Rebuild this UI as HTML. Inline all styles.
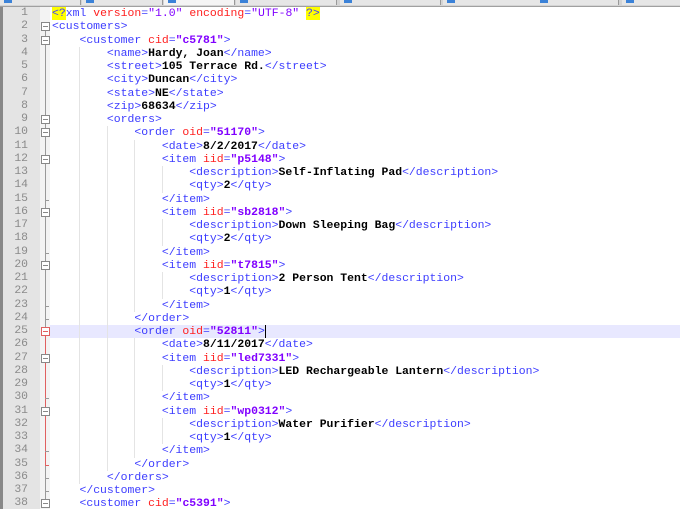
<!DOCTYPE html>
<html><head><meta charset="utf-8"><style>
body{margin:0;width:680px;height:509px;overflow:hidden;background:#fff;position:relative;font-family:"Liberation Mono",monospace}
#tabs{position:absolute;left:0;top:0;width:680px;height:6px;background:#d4d4d4;border-bottom:1px solid #a0a0a0}
.tb{position:absolute;top:0;height:5px;background:#e6e6e6;border-right:1px solid #999}
.ic{position:absolute;top:0;width:8px;height:3px;background:#3b82d8}
#lb{position:absolute;left:0;top:7px;width:3px;height:502px;background:#888}
#gut{position:absolute;left:3px;top:7px;width:37px;height:502px;background:#e4e4e4}
#fold{position:absolute;left:40px;top:7px;width:10px;height:502px;background:#f3f3f3}
.ln{position:absolute;left:3px;width:25px;text-align:right;color:#8a8a8a;font-size:11.4px;line-height:13.25px;font-family:"Liberation Mono",monospace}
.cl{position:absolute;left:52px;white-space:pre;font-size:11.45px;line-height:13.25px;color:#000}
.t{color:#3c3cff}.a{color:#ff2020}.v{color:#8000ff;font-weight:bold}.x{font-weight:bold}
.y{background:#ffff00}
.fb{position:absolute;left:41px;width:7px;height:7px;border:1px solid #888;background:#fff}
.fb:after{content:"";position:absolute;left:1px;top:3px;width:5px;height:1px;background:#888}
.fbr{border-color:#e06060}.fbr:after{background:#e06060}
.vl{position:absolute;left:45px;width:1px;background:#999}
.tk{position:absolute;left:45px;width:4px;height:1px;background:#999}
.ig{position:absolute;width:1px;background:#e4e4e4}
#hl{position:absolute;left:50px;width:630px;height:13px;background:#e8e8ff}
</style></head><body>
<div id="tabs">
<div class="tb" style="left:0;width:80px"></div><div class="ic" style="left:4px"></div>
<div class="tb" style="left:82px;width:80px"></div><div class="ic" style="left:86px"></div>
<div class="tb" style="left:164px;width:70px;background:#f4f4f4"></div><div class="ic" style="left:168px"></div>
<div class="tb" style="left:236px;width:100px"></div><div class="ic" style="left:240px"></div>
<div class="tb" style="left:340px;width:100px"></div><div class="ic" style="left:344px"></div>
<div class="tb" style="left:443px;width:100px"></div><div class="ic" style="left:447px"></div>
<div class="tb" style="left:538px;width:80px"></div><div class="ic" style="left:540px"></div>
<div class="tb" style="left:622px;width:58px"></div><div class="ic" style="left:626px"></div>
</div>
<div id="lb"></div><div id="gut"></div><div id="fold"></div>
<div id="hl" style="top:325px"></div>
<div id="c"></div>
<script>
var L=[
'<span class="t"><span class="y">&lt;?</span>xml </span><span class="a">version</span><span class="t">=</span><span class="v" style="font-weight:normal">"1.0"</span> <span class="a">encoding</span><span class="t">=</span><span class="v" style="font-weight:normal">"UTF-8"</span> <span class="t y">?&gt;</span>',
'<span class="t">&lt;customers&gt;</span>',
'    <span class="t">&lt;customer </span><span class="a">cid</span><span class="t">=</span><span class="v">"c5781"</span><span class="t">&gt;</span>',
'        <span class="t">&lt;name&gt;</span><span class="x">Hardy, Joan</span><span class="t">&lt;/name&gt;</span>',
'        <span class="t">&lt;street&gt;</span><span class="x">105 Terrace Rd.</span><span class="t">&lt;/street&gt;</span>',
'        <span class="t">&lt;city&gt;</span><span class="x">Duncan</span><span class="t">&lt;/city&gt;</span>',
'        <span class="t">&lt;state&gt;</span><span class="x">NE</span><span class="t">&lt;/state&gt;</span>',
'        <span class="t">&lt;zip&gt;</span><span class="x">68634</span><span class="t">&lt;/zip&gt;</span>',
'        <span class="t">&lt;orders&gt;</span>',
'            <span class="t">&lt;order </span><span class="a">oid</span><span class="t">=</span><span class="v">"51170"</span><span class="t">&gt;</span>',
'                <span class="t">&lt;date&gt;</span><span class="x">8/2/2017</span><span class="t">&lt;/date&gt;</span>',
'                <span class="t">&lt;item </span><span class="a">iid</span><span class="t">=</span><span class="v">"p5148"</span><span class="t">&gt;</span>',
'                    <span class="t">&lt;description&gt;</span><span class="x">Self-Inflating Pad</span><span class="t">&lt;/description&gt;</span>',
'                    <span class="t">&lt;qty&gt;</span><span class="x">2</span><span class="t">&lt;/qty&gt;</span>',
'                <span class="t">&lt;/item&gt;</span>',
'                <span class="t">&lt;item </span><span class="a">iid</span><span class="t">=</span><span class="v">"sb2818"</span><span class="t">&gt;</span>',
'                    <span class="t">&lt;description&gt;</span><span class="x">Down Sleeping Bag</span><span class="t">&lt;/description&gt;</span>',
'                    <span class="t">&lt;qty&gt;</span><span class="x">2</span><span class="t">&lt;/qty&gt;</span>',
'                <span class="t">&lt;/item&gt;</span>',
'                <span class="t">&lt;item </span><span class="a">iid</span><span class="t">=</span><span class="v">"t7815"</span><span class="t">&gt;</span>',
'                    <span class="t">&lt;description&gt;</span><span class="x">2 Person Tent</span><span class="t">&lt;/description&gt;</span>',
'                    <span class="t">&lt;qty&gt;</span><span class="x">1</span><span class="t">&lt;/qty&gt;</span>',
'                <span class="t">&lt;/item&gt;</span>',
'            <span class="t">&lt;/order&gt;</span>',
'            <span class="t">&lt;order </span><span class="a">oid</span><span class="t">=</span><span class="v">"52811"</span><span class="t">&gt;</span>',
'                <span class="t">&lt;date&gt;</span><span class="x">8/11/2017</span><span class="t">&lt;/date&gt;</span>',
'                <span class="t">&lt;item </span><span class="a">iid</span><span class="t">=</span><span class="v">"led7331"</span><span class="t">&gt;</span>',
'                    <span class="t">&lt;description&gt;</span><span class="x">LED Rechargeable Lantern</span><span class="t">&lt;/description&gt;</span>',
'                    <span class="t">&lt;qty&gt;</span><span class="x">1</span><span class="t">&lt;/qty&gt;</span>',
'                <span class="t">&lt;/item&gt;</span>',
'                <span class="t">&lt;item </span><span class="a">iid</span><span class="t">=</span><span class="v">"wp0312"</span><span class="t">&gt;</span>',
'                    <span class="t">&lt;description&gt;</span><span class="x">Water Purifier</span><span class="t">&lt;/description&gt;</span>',
'                    <span class="t">&lt;qty&gt;</span><span class="x">1</span><span class="t">&lt;/qty&gt;</span>',
'                <span class="t">&lt;/item&gt;</span>',
'            <span class="t">&lt;/order&gt;</span>',
'        <span class="t">&lt;/orders&gt;</span>',
'    <span class="t">&lt;/customer&gt;</span>',
'    <span class="t">&lt;customer </span><span class="a">cid</span><span class="t">=</span><span class="v">"c5391"</span><span class="t">&gt;</span>'
];
var H=13.25,T=7,h='';
function y(i){return T+i*H;}
for(var i=0;i<L.length;i++){
 h+='<div class="ln" style="top:'+y(i)+'px">'+(i+1)+'</div>';
 h+='<div class="cl" style="top:'+y(i)+'px">'+L[i]+'</div>';
}
var CW=6.87;
var G=[[1,3,35],[2,9,34],[3,10,22],[3,25,33],[4,12,13],[4,16,17],[4,20,21],[4,27,28],[4,31,32]];
G.forEach(function(g){h+='<div class="ig" style="left:'+Math.round(52+g[0]*4*CW)+'px;top:'+y(g[1])+'px;height:'+((g[2]-g[1]+1)*H)+'px"></div>';});
h+='<div class="vl" style="top:'+(y(1)+10)+'px;height:'+(y(37)-y(1)-8)+'px"></div>';
h+='<div class="vl" style="top:'+(y(24)+10)+'px;height:'+(y(34)+7-y(24)-10)+'px;background:#e06060"></div>';
[14,18,22,23,29,33,35,36].forEach(function(i){h+='<div class="tk" style="top:'+Math.round(y(i)+7)+'px"></div>';});
h+='<div class="tk" style="top:'+Math.round(y(34)+7)+'px;background:#e06060"></div>';
[1,2,8,9,11,15,19,24,26,30,37].forEach(function(i){h+='<div class="fb'+(i==24?' fbr':'')+'" style="top:'+Math.round(y(i)+2)+'px"></div>';});
h+='<div style="position:absolute;left:'+Math.round(52+31*CW)+'px;top:'+y(24)+'px;width:1px;height:13px;background:#000"></div>';
document.getElementById('c').innerHTML=h;
</script>
</body></html>
